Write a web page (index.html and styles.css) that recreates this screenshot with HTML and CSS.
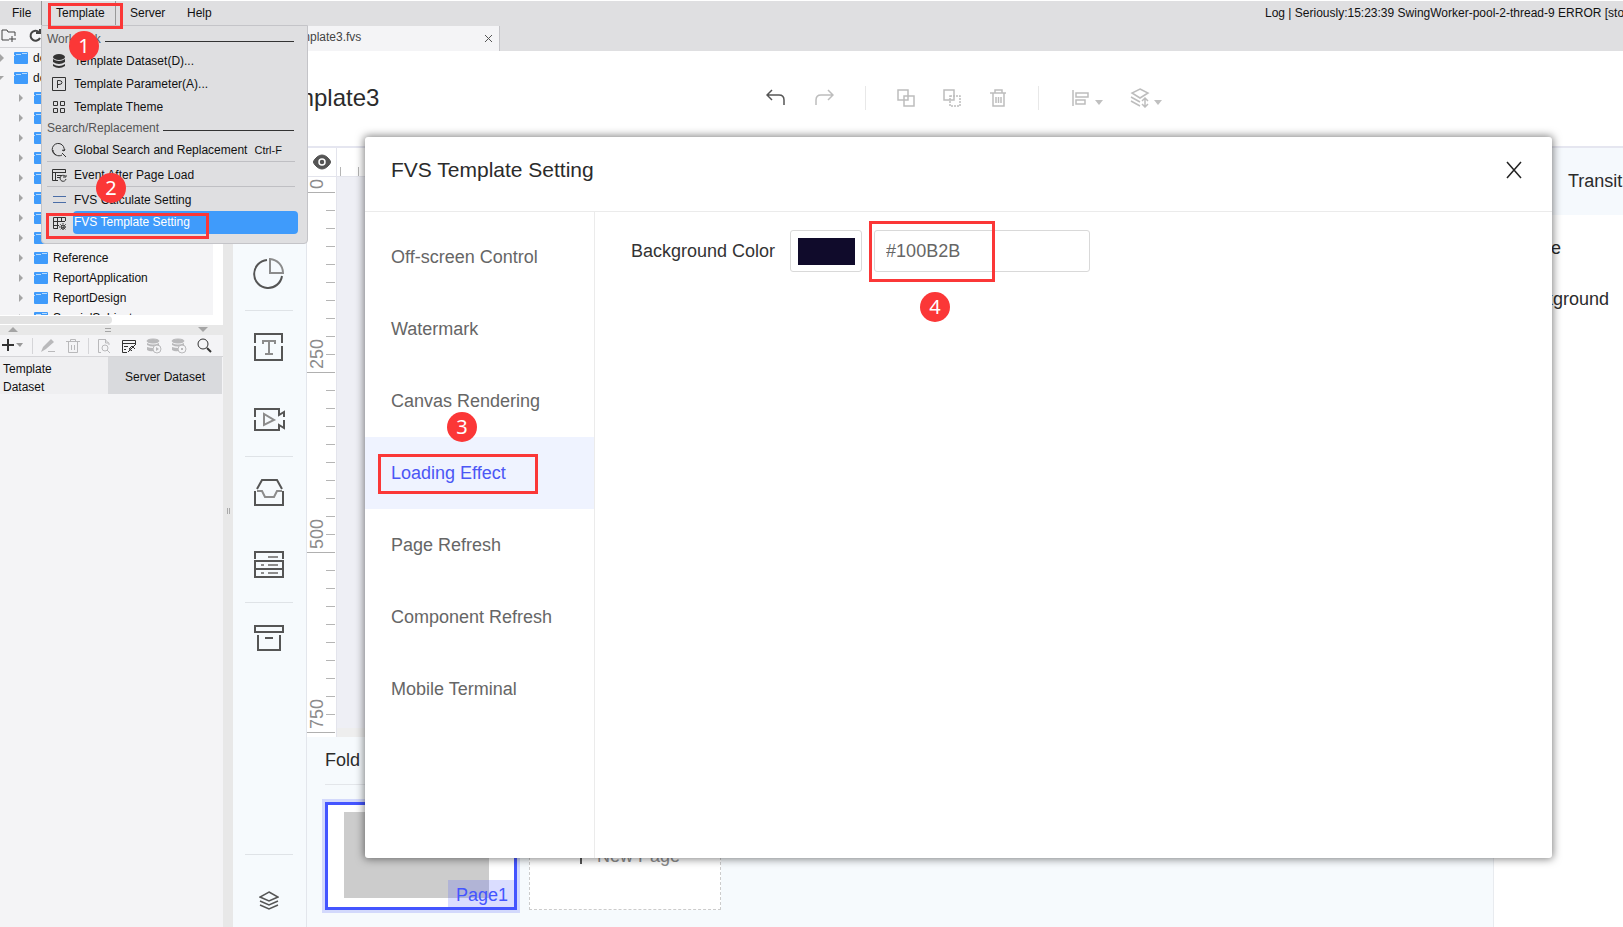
FILE: index.html
```html
<!DOCTYPE html>
<html lang="en">
<head>
  <meta charset="UTF-8">
  <meta name="viewport" content="width=device-width, initial-scale=1.0">
  <title>FVS Template Setting</title>
  <link rel="stylesheet" href="styles.css">
</head>
<body>
  <nav class="menubar">
    <button class="menu-file">File</button>
    <button class="menu-open">Template<span class="mark mark-template"></span></button>
    <button>Server</button>
    <button>Help</button>
    <span class="log">Log | Seriously:15:23:39 SwingWorker-pool-2-thread-9 ERROR [store]</span>
  </nav>

  <div class="workspace">
    <aside class="left">
      <div class="tree-tools">
        <svg width="16" height="16" viewBox="0 0 16 16"><path d="M8 12H1V2h5l1 2h7v4M11 8v6M8 11h7"/></svg>
        <svg width="16" height="16" viewBox="0 0 16 16"><path d="M12 4A5 5 0 1 0 13 10M13 1v4h-4" stroke-width="2"/></svg>
      </div>
      <div class="tree-wrap">
        <ul class="tree">
          <li class="root"><i class="arrow"></i><i class="folder"></i>demo</li>
          <li class="root"><i class="arrow down"></i><i class="folder"></i>doc</li>
          <li><i class="arrow"></i><i class="folder"></i></li>
          <li><i class="arrow"></i><i class="folder"></i></li>
          <li><i class="arrow"></i><i class="folder"></i></li>
          <li><i class="arrow"></i><i class="folder"></i></li>
          <li><i class="arrow"></i><i class="folder"></i></li>
          <li><i class="arrow"></i><i class="folder"></i></li>
          <li><i class="arrow"></i><i class="folder"></i></li>
          <li><i class="arrow"></i><i class="folder"></i></li>
          <li><i class="arrow"></i><i class="folder"></i>Reference</li>
          <li><i class="arrow"></i><i class="folder"></i>ReportApplication</li>
          <li><i class="arrow"></i><i class="folder"></i>ReportDesign</li>
          <li><i class="arrow"></i><i class="folder"></i>SpecialSubject</li>
        </ul>
      </div>
      <div class="scroll-x"><div class="thumb"></div></div>
      <div class="splitter">
        <svg width="10" height="6" viewBox="0 0 10 6"><path d="M0 5l5-5 5 5z"/></svg>
        <svg width="8" height="6" viewBox="0 0 8 6"><path d="M1 1h6v1H1zM1 4h6v1H1z"/></svg>
        <svg width="10" height="6" viewBox="0 0 10 6"><path d="M0 0h10L5 5z"/></svg>
      </div>
      <div class="data-tools">
        <svg width="24" height="18" viewBox="0 0 24 18" class="dark"><path d="M1 8h12M7 2v12" stroke-width="2"/><path d="M15 6h7l-3 4z" fill="#999" stroke="none"/></svg>
        <i class="bar"></i>
        <svg width="16" height="16" viewBox="0 0 16 16"><path d="M1 14l2-5 8-8 3 3-8 7z" fill="#b9b9bb" stroke="none"/><path d="M8 13.500h7"/></svg>
        <svg width="16" height="16" viewBox="0 0 16 16"><path d="M1 3.500h14M5.500 3V1.500h5V3M3.500 4v10.500h9V4M6.500 7v5M9.500 7v5"/></svg>
        <i class="bar"></i>
        <svg width="16" height="16" viewBox="0 0 16 16"><path d="M5 14.500H2.500V1.500H9l4 4V7M9.500 1v4H13"/><circle cx="9" cy="10" r="3"/><path d="M11 12l3 3"/></svg>
        <svg width="16" height="16" viewBox="0 0 16 16" class="dark"><path d="M6 14.500H1.500V2.500h13V7M1 5.500h13M3 8.500h4M3 11.500h2"/><path d="M7 14l7-7M8 10l3 3M11 8l3 3M9 13a3 3 0 0 1 0-3l2-2"/></svg>
        <svg width="16" height="16" viewBox="0 0 16 16"><ellipse cx="7" cy="3" rx="6" ry="2" fill="#b9b9bb"/><path d="M1 5v2q6 3 12 0V5q-6 3-12 0zM1 9v3q3 2 6 1V10q-3 0-6-1z" fill="#b9b9bb" stroke="none"/><circle cx="11" cy="11" r="4" fill="#f4f4f6"/><path d="M10 9l3 2-3 2z" fill="#b9b9bb" stroke="none"/></svg>
        <svg width="16" height="16" viewBox="0 0 16 16"><ellipse cx="7" cy="3" rx="6" ry="2" fill="#b9b9bb"/><path d="M1 5v2q6 3 12 0V5q-6 3-12 0zM1 9v3q3 2 6 1V10q-3 0-6-1z" fill="#b9b9bb" stroke="none"/><circle cx="11" cy="11" r="4" fill="#f4f4f6"/><path d="M10 10l2 2M12 10l-2 2"/></svg>
        <svg width="16" height="16" viewBox="0 0 16 16" class="dark"><circle cx="7" cy="6" r="5"/><path d="M11 10l4 4" stroke-width="2"/></svg>
      </div>
      <div class="data-tabs">
        <button>Template Dataset</button>
        <button class="selected">Server Dataset</button>
      </div>
    </aside>
    <div class="divider"><i></i></div>

    <div class="editor">
      <div class="file-tabs">
        <div class="file-tab"><span>template3.fvs</span><button aria-label="Close tab"><svg width="9" height="9" viewBox="0 0 9 9"><path d="M1 1l7 7M8 1L1 8"/></svg></button></div>
      </div>
      <header class="editor-head">
        <h1>template3</h1>
        <div class="actions">
          <svg class="undo" width="20" height="18" viewBox="0 0 20 18"><path d="M6 1L1 6l5 5M1 6h12q5 0 5 5v5"/></svg>
          <svg class="redo" width="20" height="18" viewBox="0 0 20 18"><path d="M14 1l5 5-5 5M19 6H7q-5 0-5 5v5"/></svg>
          <i class="bar"></i>
          <svg width="18" height="18" viewBox="0 0 18 18"><path d="M1 1h10v10H1zM7 7h10v10H7z"/></svg>
          <svg width="18" height="18" viewBox="0 0 18 18"><path d="M1 1h10v10H1z"/><path d="M7 7h10v10H7z" stroke-dasharray="2 1"/></svg>
          <svg width="18" height="18" viewBox="0 0 18 18"><path d="M1 4h16M6 4V1h7v3M4 4v13h11V4M7 8v6M9.500 8v6M12 8v6"/></svg>
          <i class="bar"></i>
          <svg class="wide" width="32" height="20" viewBox="0 0 32 20"><path d="M2 2v16M5 5h12v4H5zM5 12h9v4H5z"/><path d="M24 12h8l-4 5z" fill="#c0c0c0" stroke="none"/></svg>
          <svg class="wide" width="32" height="20" viewBox="0 0 32 20"><path d="M10 1l8 4-8 5-8-5zM1 9l9 5M1 13l9 5M15 10v9M12 13l3-3 3 3M12 16l3 3 3-3"/><path d="M24 12h8l-4 5z" fill="#c0c0c0" stroke="none"/></svg>
        </div>
      </header>
      <div class="editor-body">
        <div class="toolstrip">
          <svg width="34" height="34" viewBox="0 0 34 34"><path d="M15 4A14 14 0 1 0 30 20"/><path d="M18 3v14h13A14 14 0 0 0 18 3z" class="soft"/></svg>
          <hr>
          <svg width="34" height="34" viewBox="0 0 34 34"><path d="M3 13V4h27v9M3 16v14h27V16"/><path d="M11 14v-3h12v3M17 11v13M13 24h8" class="soft"/></svg>
          <svg width="34" height="34" viewBox="0 0 34 34"><path d="M3 15V7h24v6l5-3v5M3 18v10h24v-5l5 3v-8"/><path d="M12 12v11l10-5z" class="soft"/></svg>
          <hr>
          <svg width="34" height="34" viewBox="0 0 34 34"><path d="M5 13l5-9h15l5 9M3 15v14h28V15"/><path d="M5 15h5l3 6h9l3-6h5" class="soft"/></svg>
          <svg width="34" height="34" viewBox="0 0 34 34"><path d="M3 11V4h28v7M3 13h28v8H3zM3 21h28v8H3z"/><path d="M16 9h10M16 17h10M16 25h10M9 17h3M9 25h3" class="soft"/></svg>
          <hr>
          <svg width="34" height="34" viewBox="0 0 34 34"><path d="M3 4h28v6H3zM6 13v15h22V13M13 16h8"/></svg>
          <hr class="bottom">
          <svg class="layers" width="20" height="20" viewBox="0 0 20 20"><path d="M10 1l9 5-9 4-9-4zM1 10l9 4 9-4M1 14l9 4 9-4"/></svg>
        </div>
        <main class="stage">
          <div class="ruler-top"><span class="eye"><svg width="18" height="16" viewBox="0 0 18 16"><path d="M0 8q4-7 9-7t9 7q-4 7-9 7T0 8z" fill="#555"/><circle cx="9" cy="8" r="3" fill="#555" stroke="#fff" stroke-width="1.500"/></svg></span><span class="ticks"></span></div>
          <div class="canvas-row">
            <div class="ruler">
              <div class="seg first"><span>0</span></div>
              <div class="seg"><span>250</span></div>
              <div class="seg"><span>500</span></div>
              <div class="seg"><span>750</span></div>
            </div>
            <div class="canvas"></div>
          </div>
          <footer class="pages">
            <div class="fold">Fold</div>
            <div class="page-list">
              <div class="page"><div class="thumb-img"></div><span>Page1</span></div>
              <button class="new-page"><svg width="16" height="16" viewBox="0 0 16 16"><path d="M8 0v16M0 8h16" stroke-width="2"/></svg>New Page</button>
            </div>
          </footer>
        </main>
        <aside class="props">
          <div class="props-tabs"><button>Transition</button></div>
          <div class="prop">Name</div>
          <div class="prop">Background</div>
        </aside>
      </div>
    </div>
  </div>

  <div class="dropdown">
    <div class="group">Workbook</div>
    <button><svg width="16" height="16" viewBox="0 0 16 16"><g fill="#333" stroke="none"><ellipse cx="8" cy="4" rx="6" ry="3"/><path d="M2 6q6 4 12 0v3q-6 4-12 0zM2 11q6 4 12 0v2q-6 4-12 0z"/></g></svg>Template Dataset(D)...</button>
    <button><svg width="16" height="16" viewBox="0 0 16 16"><path d="M1.500 1.500h13v13h-13zM6.500 12V4.500H8q3 0 3 2t-3 2H6.500"/></svg>Template Parameter(A)...</button>
    <button><svg width="16" height="16" viewBox="0 0 16 16"><path d="M2.500 2.500h4v4h-4zM9.500 2.500h4v4h-4zM2.500 9.500h4v4h-4zM9.500 9.500h4v4h-4z"/></svg>Template Theme</button>
    <div class="group">Search/Replacement</div>
    <button class="search"><svg width="16" height="16" viewBox="0 0 16 16"><path d="M5 13A6 6 0 1 1 13 9M2 8a6 6 0 0 0 9 5M11 11l4 4M13 9l1-2M13 9l-2-1"/></svg>Global Search and Replacement<small>Ctrl-F</small></button>
    <hr>
    <button><svg width="16" height="16" viewBox="0 0 16 16"><path d="M7 13.500H1.500V2.500h13V6M1 5.500h13M4.500 5v8M6 8.500h5M6 10.500h3M14 9a3 3 0 1 0 1 3M15 8v2h-3"/></svg>Event After Page Load</button>
    <hr>
    <button><svg width="16" height="16" viewBox="0 0 16 16"><path d="M2 4.500h13M2 10.500h13" stroke="#4a6da7"/></svg>FVS Calculate Setting</button>
    <button class="current"><svg width="16" height="16" viewBox="0 0 16 16"><path d="M7 13.500H2.500V2.500h12V6M2 6.500h12M2 10.500h6M6.500 2v11M10.500 2v4"/><circle cx="12" cy="12" r="2"/><path d="M12 8v8M8 12h8M9 9l6 6M15 9l-6 6" stroke-dasharray="1 1"/></svg><span>FVS Template Setting</span><i class="mark mark-setting"></i></button>
    <b class="badge badge-1">1</b>
    <b class="badge badge-2">2</b>
  </div>

  <section class="dialog" role="dialog" aria-labelledby="dialog-title">
    <header>
      <h2 id="dialog-title">FVS Template Setting</h2>
      <button aria-label="Close"><svg width="16" height="18" viewBox="0 0 16 18"><path d="M1 1l14 16M15 1L1 17"/></svg></button>
    </header>
    <div class="dialog-body">
      <nav>
        <a href="#">Off-screen Control</a>
        <a href="#">Watermark</a>
        <a href="#">Canvas Rendering</a>
        <a href="#" class="active">Loading Effect<i class="mark mark-loading"></i><b class="badge badge-3">3</b></a>
        <a href="#">Page Refresh</a>
        <a href="#">Component Refresh</a>
        <a href="#">Mobile Terminal</a>
      </nav>
      <div class="form">
        <label for="bg">Background Color</label>
        <button class="swatch" aria-label="Pick color"><span></span></button>
        <div class="field">
          <input id="bg" type="text" value="#100B2B">
          <i class="mark mark-color"></i>
          <b class="badge badge-4">4</b>
        </div>
      </div>
    </div>
  </section>
</body>
</html>
```
FILE: styles.css
```css
* {
  box-sizing: border-box;
}

body {
  margin: 0;
  height: 100vh;
  overflow: hidden;
  display: flex;
  flex-direction: column;
  position: relative;
  font-family: "Liberation Sans", Arial, sans-serif;
  font-size: 12px;
  color: #111;
  background: #fff;
}

button {
  font: inherit;
  color: inherit;
  border: 0;
  padding: 0;
  background: none;
}

svg {
  fill: none;
  stroke: #555;
  flex-shrink: 0;
}

/* menu bar */
.menubar {
  display: flex;
  height: 25px;
  margin-top: 1px;
  margin-bottom: -1px;
  background: #dfdfe1;
  flex-shrink: 0;
}

.menubar button {
  height: 24px;
  width: 57px;
  padding-left: 14px;
  text-align: left;
}

.menubar .menu-file {
  width: 41px;
  padding-left: 12px;
}

.menubar .menu-open {
  position: relative;
  width: 75px;
  border-left: 1px solid #999;
  border-right: 1px solid #999;
}

.log {
  margin-left: auto;
  width: 358px;
  line-height: 24px;
  white-space: nowrap;
  overflow: hidden;
}

.workspace {
  display: flex;
  flex: 1;
  min-height: 0;
}

/* left panel */
.left {
  width: 223px;
  background: #f4f4f6;
  flex-shrink: 0;
}

.tree-tools {
  display: flex;
  gap: 10px;
  height: 23px;
  padding: 3px 1px;
  border-bottom: 1px solid #d5d5d8;
}

.tree-tools svg {
  stroke: #444;
}

.tree-wrap {
  height: 267px;
  padding-right: 10px;
  background: #fff;
  overflow: hidden;
}

.tree {
  margin: 0;
  padding: 0;
  list-style: none;
  background: #f4f4f6;
}

.tree li {
  display: flex;
  align-items: center;
  height: 20px;
  padding-left: 19px;
}

.tree li.root {
  padding-left: 0;
}

.arrow {
  width: 4px;
  border: 4px solid transparent;
  border-left-color: #a5a5a5;
  border-right-width: 0;
  margin-right: 11px;
}

.root .arrow {
  margin-right: 10px;
}

.arrow.down {
  width: 8px;
  border: 4px solid transparent;
  border-top-color: #a5a5a5;
  border-bottom-width: 0;
  margin-left: -4px;
}

.folder {
  width: 14px;
  height: 12px;
  margin-right: 5px;
  border-radius: 1px;
  background: linear-gradient(170deg, #3f9bfb 20%, #b8dafc 20%, #b8dafc 26%, #3f9bfb 26%);
}

.scroll-x {
  height: 10px;
  padding: 1px 0;
  background: #fff;
}

.thumb {
  width: 50%;
  height: 8px;
  border-radius: 0 4px 4px 0;
  background: #e3e3e3;
}

.splitter {
  display: flex;
  justify-content: space-between;
  align-items: center;
  height: 10px;
  padding: 0 15px 0 8px;
  background: #e8e8e8;
}

.splitter svg {
  fill: #a5a5a5;
  stroke: none;
}

.data-tools {
  display: flex;
  align-items: center;
  gap: 9px;
  height: 22px;
  padding-left: 1px;
  border-bottom: 1px solid #d5d5d8;
}

.data-tools svg {
  stroke: #b9b9bb;
}

.data-tools svg.dark {
  stroke: #333;
}

.data-tools .bar {
  width: 1px;
  height: 16px;
  margin: 0 -2px;
  background: #d5d5d8;
}

.data-tabs {
  display: flex;
  height: 37px;
  padding-right: 1px;
}

.data-tabs button {
  width: 108px;
  padding: 3px 40px 0 3px;
  line-height: 18px;
  text-align: left;
  background: #efeff1;
}

.data-tabs .selected {
  flex: 1;
  padding: 3px 0 0;
  text-align: center;
  background: #d9dadd;
}

.divider {
  display: flex;
  align-items: center;
  justify-content: center;
  width: 10px;
  padding-top: 70px;
  background: #e8e8e8;
  flex-shrink: 0;
}

.divider i {
  width: 3px;
  height: 6px;
  border: 1px solid #aaa;
  border-width: 0 1px;
}

/* editor */
.editor {
  display: flex;
  flex-direction: column;
  flex: 1;
  min-width: 0;
}

.file-tabs {
  height: 26px;
  padding-top: 1px;
  background: #dfdfe1;
}

.file-tab {
  display: flex;
  align-items: center;
  justify-content: space-between;
  width: 267px;
  height: 25px;
  padding: 0 6px 4px 57px;
  color: #444;
  background: #f4f4f6;
  border-right: 1px solid #c4c4c8;
}

.file-tab svg {
  display: block;
  margin-top: 4px;
}

.editor-head {
  display: flex;
  align-items: center;
  height: 95px;
  padding-left: 41px;
  padding-bottom: 2px;
}

.editor-head h1 {
  margin: 0;
  font-size: 24px;
  font-weight: normal;
  color: #2b2b2b;
  width: 492px;
}

.actions {
  display: flex;
  align-items: center;
  gap: 28px;
}

.actions svg {
  stroke: #bdbdbd;
  stroke-width: 1.5;
}

.actions .undo {
  stroke: #555;
}

.actions .bar {
  width: 1px;
  height: 24px;
  margin: 0 3px;
  background: #e8e8e8;
}

.actions .wide {
  margin-left: 1px;
  margin-right: -2px;
}

.editor-body {
  display: flex;
  flex: 1;
  min-height: 0;
  border-top: 2px solid #e5e6f0;
}

.toolstrip {
  display: flex;
  flex-direction: column;
  align-items: center;
  width: 74px;
  padding: 108px 1px 16px 0;
  background: #f6fafd;
  border-right: 1px solid #e3e6ec;
  flex-shrink: 0;
}

.toolstrip svg {
  stroke-width: 2;
  margin-bottom: 38px;
}

.toolstrip .soft {
  stroke: #8c8c8c;
}

.toolstrip hr {
  width: 48px;
  height: 1px;
  border: 0;
  margin: -18px 0 19px;
  background: #dfe3e7;
}

.toolstrip .bottom {
  margin: auto 0 36px;
}

.toolstrip .layers {
  stroke-width: 1.5;
  margin: 0;
}

.stage {
  display: flex;
  flex-direction: column;
  flex: 1;
  min-width: 0;
}

.ruler-top {
  display: flex;
  height: 29px;
  border-bottom: 1px solid #e3e4ec;
}

.eye {
  width: 30px;
  padding: 6px;
  border-right: 1px solid #e3e4ec;
}

.ticks {
  flex: 1;
  margin: 19px 0 0 3px;
  background: repeating-linear-gradient(90deg, #b5b5b5 0 1px, transparent 1px 18px);
}

.canvas-row {
  display: flex;
  flex: 1;
  min-height: 0;
  overflow: hidden;
}

.ruler {
  width: 30px;
  border-right: 1px solid #e3e4ec;
  flex-shrink: 0;
}

.seg {
  display: flex;
  align-items: flex-end;
  height: 180px;
  width: 28px;
  padding: 0 0 3px 1px;
  border-bottom: 1px solid #b0b0b0;
  background: repeating-linear-gradient(transparent 0 17px, #b5b5b5 17px 18px) right top / 9px 100% no-repeat;
}

.seg.first {
  height: 16px;
  background: none;
}

.seg span {
  writing-mode: vertical-rl;
  transform: rotate(180deg);
  font-size: 18px;
  line-height: 18px;
  color: #8c8c8c;
}

.canvas {
  flex: 1;
  background: #eeeff5;
  border-bottom: 9px solid #eeeeee;
}

.pages {
  height: 190px;
  padding: 9px 18px 0;
  background: #f6fafd;
}

.fold {
  height: 39px;
  font-size: 18px;
  line-height: 28px;
  color: #2b2b2b;
  border-bottom: 1px solid #e3e6ea;
}

.page-list {
  display: flex;
  gap: 12px;
  margin-top: 17px;
}

.page {
  position: relative;
  width: 192px;
  height: 108px;
  padding: 7px 25px 9px 16px;
  border: 3px solid #4455ff;
  box-shadow: 0 0 0 3px #d3d9fc;
  background: #fff;
}

.thumb-img {
  height: 86px;
  background: #ccc;
}

.page span {
  position: absolute;
  right: 0;
  bottom: 0;
  padding: 3px 6px 0 8px;
  font-size: 18px;
  line-height: 24px;
  color: #4455ff;
  background: rgba(68, 85, 255, 0.2);
}

.new-page {
  display: flex;
  align-items: center;
  justify-content: center;
  gap: 8px;
  width: 192px;
  height: 108px;
  padding-left: 3px;
  font-size: 18px;
  color: #8c8c8c;
  border: 1px dashed #ccc;
  background: #fff;
}

.props {
  width: 130px;
  font-size: 18px;
  color: #2b2b2b;
  background: #fff;
  border-left: 1px solid #e8ebef;
  flex-shrink: 0;
}

.props-tabs {
  height: 67px;
  margin-bottom: 8px;
  padding-left: 74px;
  overflow: hidden;
  background: #f5f9fd;
}

.props-tabs button {
  line-height: 67px;
}

.prop {
  height: 51px;
  padding-left: 19px;
  line-height: 51px;
}

/* Template menu */
.dropdown {
  position: absolute;
  left: 41px;
  top: 25px;
  width: 267px;
  padding: 3px 9px 9px 5px;
  background: #dfdfe1;
  border: 1px solid #c4c4c8;
  border-radius: 0 0 4px 4px;
}

.dropdown button {
  position: relative;
  display: flex;
  align-items: center;
  width: 100%;
  height: 23px;
  padding-left: 4px;
  gap: 7px;
  white-space: nowrap;
}

.dropdown svg {
  stroke: #333;
}

.dropdown small {
  font-size: 11px;
}

.group {
  display: flex;
  align-items: center;
  height: 20px;
  gap: 4px;
  color: #555;
}

.group::after {
  content: "";
  flex: 1;
  height: 1px;
  margin: 4px 4px 0 0;
  background: #333;
}

.dropdown hr {
  height: 1px;
  margin: 0 3px 1px 0;
  border: 0;
  background: #bfbfc3;
}

.dropdown .current {
  gap: 6px;
}

.current span {
  flex: 1;
  padding: 0 0 1px 1px;
  line-height: 22px;
  text-align: left;
  color: #fff;
  background: #3f9bfb;
  border-radius: 4px;
}

/* settings dialog */
.dialog {
  position: absolute;
  left: 365px;
  right: 71px;
  top: 137px;
  bottom: 69px;
  display: flex;
  flex-direction: column;
  background: #fff;
  border-radius: 3px;
  box-shadow: 0 0 9px 1px rgba(0, 0, 0, 0.5);
  font-size: 18px;
}

.dialog header {
  display: flex;
  align-items: center;
  justify-content: space-between;
  height: 75px;
  padding: 0 30px 8px 26px;
  border-bottom: 1px solid #ebebeb;
}

.dialog h2 {
  margin: 0;
  font-size: 21px;
  font-weight: normal;
  color: #2b2b2b;
}

.dialog header svg {
  display: block;
  stroke: #222;
  stroke-width: 1.5;
}

.dialog-body {
  display: flex;
  flex: 1;
}

.dialog nav {
  width: 230px;
  padding-top: 9px;
  border-right: 1px solid #ebebeb;
}

.dialog nav a {
  display: block;
  position: relative;
  padding-left: 26px;
  line-height: 72px;
  color: #666;
  text-decoration: none;
}

.dialog nav .active {
  color: #4b57f5;
  background: #eff3ff;
}

.form {
  display: flex;
  align-items: center;
  height: 42px;
  margin: 18px 0 0 36px;
  color: #333;
}

.swatch {
  width: 72px;
  height: 42px;
  margin: 0 12px 0 15px;
  padding: 7px 6px 7px 7px;
  border: 1px solid #d9d9d9;
  border-radius: 3px;
}

.swatch span {
  display: block;
  height: 27px;
  background: #100b2b;
}

.field {
  position: relative;
}

.field input {
  display: block;
  width: 216px;
  height: 42px;
  padding: 0 11px;
  font: inherit;
  color: #666;
  border: 1px solid #d9d9d9;
  border-radius: 3px;
}

/* step marks */
.mark {
  position: absolute;
  border: 3px solid #fb3737;
}

.mark-template {
  left: 6px;
  top: 2px;
  width: 75px;
  height: 26px;
  z-index: 2;
}

.mark-setting {
  left: -1px;
  top: 2px;
  width: 163px;
  height: 26px;
}

.mark-loading {
  left: 13px;
  top: 17px;
  width: 160px;
  height: 40px;
}

.mark-color {
  left: -5px;
  top: -9px;
  width: 126px;
  height: 61px;
}

.badge {
  position: absolute;
  width: 30px;
  height: 30px;
  border-radius: 50%;
  font: 20px/29px "Noto Sans", sans-serif;
  text-align: center;
  color: #fff;
  background: #fb3737;
}

.badge-1 {
  left: 27px;
  top: 5px;
}

.badge-2 {
  left: 54px;
  top: 147px;
}

.badge-3 {
  left: 82px;
  top: -25px;
}

.badge-4 {
  left: 46px;
  top: 62px;
}
```
